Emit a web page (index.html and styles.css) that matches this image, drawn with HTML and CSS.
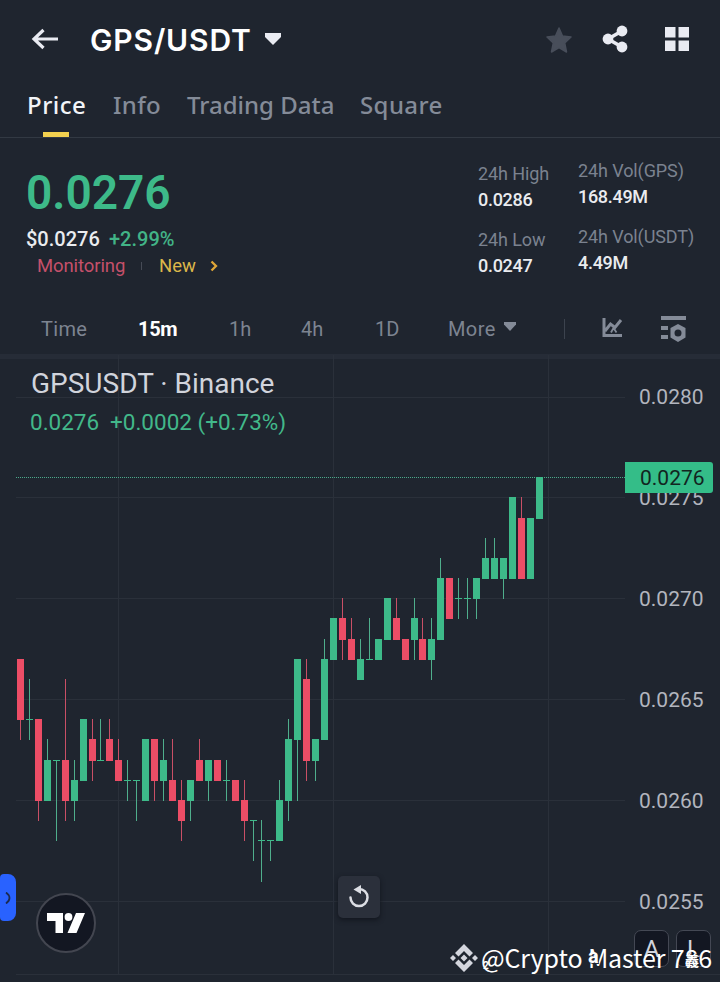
FILE: index.html
```html
<!DOCTYPE html>
<html lang="en">
<head>
<meta charset="utf-8">
<title>GPS/USDT</title>
<link rel="stylesheet" href="styles.css">
</head>
<body>
<div class="app">
  <header class="topbar">
    <svg class="back" width="28" height="22" viewBox="0 0 28 22"><path d="M27 11H3M12.500 2L3 11l9.500 9" fill="none" stroke="#e9ebf2" stroke-width="3.200"/></svg>
    <h1 class="title">GPS/USDT</h1>
    <svg class="caret" width="18" height="14" viewBox="0 0 18 14"><path d="M1 1h16v4L9 13 1 5z" fill="#e9ebf2"/></svg>
    <svg class="star" width="28" height="28" viewBox="0 0 28 28"><path d="M14 2l3.500 8 8.500 1-6.300 6 1.800 9L14 21.700 6.500 26l1.800-9L2 11l8.500-1z" fill="#484e5a" stroke="#484e5a" stroke-width="1.500" stroke-linejoin="round"/></svg>
    <svg class="share" width="26" height="28" viewBox="0 0 26 28"><path d="M20 6L6 14l14 8" fill="none" stroke="#e9ebf2" stroke-width="3.600"/><circle cx="20" cy="6" r="5.400" fill="#e9ebf2"/><circle cx="6" cy="14" r="5.400" fill="#e9ebf2"/><circle cx="20" cy="22" r="5.400" fill="#e9ebf2"/></svg>
    <svg class="tiles" width="24" height="24" viewBox="0 0 24 24"><path d="M0 0h10.500v10.500H0zM13.500 0H24v10.500H13.500zM0 13.500h10.500V24H0zM13.500 13.500H24V24H13.500z" fill="#e9ebf2"/></svg>
  </header>
  <nav class="tabs">
    <span class="tab tab-price active">Price</span>
    <span class="tab tab-info">Info</span>
    <span class="tab tab-data">Trading Data</span>
    <span class="tab tab-square">Square</span>
  </nav>
  <section class="summary">
    <div class="quote">
      <div class="last">0.0276</div>
      <div class="fiat"><span class="usd">$0.0276</span><span class="pct">+2.99%</span></div>
      <div class="tags"><span class="monitoring">Monitoring</span><i class="tick"></i><span class="new">New</span>
        <svg width="8" height="12" viewBox="0 0 8 12"><path d="M1.500 1.500L6 6l-4.500 4.500" fill="none" stroke="#dfa638" stroke-width="2.300"/></svg></div>
    </div>
    <dl class="stats range">
      <dt>24h High</dt><dd>0.0286</dd>
      <dt>24h Low</dt><dd>0.0247</dd>
    </dl>
    <dl class="stats volume">
      <dt>24h Vol(GPS)</dt><dd>168.49M</dd>
      <dt>24h Vol(USDT)</dt><dd>4.49M</dd>
    </dl>
  </section>
  <div class="toolbar">
    <span class="iv iv-time">Time</span>
    <span class="iv iv-15 on">15m</span>
    <span class="iv iv-1h">1h</span>
    <span class="iv iv-4h">4h</span>
    <span class="iv iv-1d">1D</span>
    <span class="iv iv-more">More</span>
    <svg class="drop" width="12" height="9" viewBox="0 0 12 9"><path d="M0 0h12v2.500L6 9 0 2.500z" fill="#848b98"/></svg>
    <i class="split"></i>
    <svg class="linechart" width="21" height="20" viewBox="0 0 21 20"><path d="M2 0v17.500h18M3 13l5.500-7 4.500 3.500L19 2" fill="none" stroke="#848b98" stroke-width="3"/><path d="M9 14.500l2.500-4.500 3 4.500" fill="none" stroke="#848b98" stroke-width="1.800"/></svg>
    <svg class="settings" width="25" height="26" viewBox="0 0 25 26"><path d="M0 0h25v4H0zM0 10h7v4H0zM0 19h7v4H0z" fill="#848b98"/><path fill-rule="evenodd" d="M17 8l7.500 4v9.500L17 26l-7.500-4.500V12zM17 13.500a3.500 3.500 0 100 7 3.500 3.500 0 000-7z" fill="#848b98"/></svg>
  </div>
  <main class="chart">
    <svg id="plot" class="plot" width="720" height="624" viewBox="0 355 720 624" shape-rendering="crispEdges"></svg>
    <div class="legend">
      <div class="symbol">GPSUSDT · Binance</div>
      <div class="change"><span class="c1">0.0276</span><span class="c2">+0.0002 (+0.73%)</span></div>
    </div>
    <div class="axis"><span>0.0280</span><span>0.0275</span><span>0.0270</span><span>0.0265</span><span>0.0260</span><span>0.0255</span></div>
    <div class="pricetag">0.0276</div>
    <div class="handle"><svg width="6" height="12" viewBox="0 0 6 12"><path d="M1 .5Q4.500 3 4.500 6T1 11.500" fill="none" stroke="#1b2a50" stroke-width="1.800"/></svg></div>
    <div class="tv"><svg width="38" height="20" viewBox="0 0 38 20"><path d="M0 0h16v20H8.500V8H0zM29 0h9l-8.500 20h-9z" fill="#fff"/><circle cx="21.500" cy="4" r="3.900" fill="#fff"/></svg></div>
    <div class="reset"><svg width="24" height="24" viewBox="0 0 24 24"><path d="M3.500 12.500a8.500 8.500 0 1 0 8.500-8.500" fill="none" stroke="#dcdee4" stroke-width="2.500" stroke-linecap="round"/><path d="M6.500 4.500L14 0v9z" fill="#dcdee4"/></svg></div>
    <div class="scale"><span>A</span><span>L</span></div>
  </main>
  <div class="watermark">
    <svg width="28" height="28" viewBox="0 0 28 28"><path d="M14 0l9 9-3.500 3.500L14 7l-5.500 5.500L5 9zM14 28l9-9-3.500-3.500L14 21l-5.500-5.500L5 19zM0 14l3-3 3 3-3 3zM22 14l3-3 3 3-3 3zM10.500 14l3.500-3.500 3.500 3.500-3.500 3.500z" fill="#d4d6de"/></svg>
    <span class="name">@Crypto Master 786</span>
    <span class="mark m1">2</span><span class="mark m2">a</span><span class="mark m3">義</span>
  </div>
</div>
<script src="chart.js"></script>
</body>
</html>
```
FILE: styles.css
```css
* { box-sizing: border-box; }
body { margin: 0; background: #1f252f; font-family: Roboto, "Noto Sans", sans-serif; color: #eaecef; }
svg { display: block; flex: none; }
.app { position: relative; width: 720px; height: 982px; overflow: hidden; display: flex; flex-direction: column; }
.app span, .app dt, .app dd, .title { white-space: nowrap; }

.topbar { height: 77px; display: flex; align-items: center; flex: none; padding-left: 31px; }
.title { margin: 3px 0 0 31px; width: 174px; font: 600 30px/40px Inter, sans-serif; letter-spacing: .85px; color: #fff; }
.star { margin: 2px 0 0 263px; }
.share { margin-left: 29px; }
.tiles { margin-left: 37px; }

.tabs { height: 61px; flex: none; display: flex; border-bottom: 1px solid #323943; padding: 1px 0 0 27px; font: 500 24px/54px "Noto Sans", sans-serif; color: #848b98; }
.tab { position: relative; }
.tab-price { width: 86px; letter-spacing: .5px; }
.tab-info { width: 74px; letter-spacing: .3px; }
.tab-data { width: 173px; }
.tab-square { letter-spacing: .4px; }
.tab.active { color: #f2f4f8; }
.tab.active::after { content: ""; position: absolute; left: 16px; top: 54px; width: 26px; height: 5px; background: #f3d14f; }

.summary { height: 164px; flex: none; display: flex; padding-left: 26px; }
.quote { width: 452px; }
.last { margin-top: 27px; height: 56px; width: 160px; font-weight: 600; font-size: 49px; line-height: 56px; color: #3dba89; transform: scaleX(.94); transform-origin: 0 0; }
.fiat { display: flex; height: 28px; margin-top: 4px; font-size: 20px; line-height: 28px; font-weight: 500; }
.usd { width: 83px; }
.pct { color: #42b487; font-weight: 500; }
.tags { display: flex; align-items: center; height: 26px; padding-left: 11px; font-size: 18.500px; }
.monitoring { width: 104px; color: #c5506a; letter-spacing: -.1px; }
.tick { width: 1px; height: 8px; background: #464b56; margin-right: 17px; }
.new { width: 51px; color: #dcb74a; }
.stats { margin: 0; font-size: 18px; line-height: 26px; }
.stats dt { color: #7b828f; height: 26px; letter-spacing: -.1px; }
.stats dd { margin: 0 0 14px; height: 26px; color: #eaecef; font-weight: 500; letter-spacing: -.3px; }
.range { width: 100px; padding-top: 23px; }
.volume { padding-top: 20px; }

.toolbar { height: 57px; flex: none; display: flex; align-items: center; padding: 1px 0 0 41px; border-bottom: 5px solid #262c37; font-size: 20px; color: #7d8491; }
.iv-time { width: 97px; letter-spacing: .3px; }
.iv-15 { width: 91px; color: #fff; font-weight: 700; letter-spacing: -.3px; }
.iv-1h { width: 72px; }
.iv-4h { width: 74px; }
.iv-1d { width: 73px; }
.iv-more { width: 56px; letter-spacing: .4px; }
.drop { margin-top: -4px; }
.split { width: 1px; height: 20px; margin: 0 37px 0 48px; background: #3c434e; }
.linechart { margin-top: -2px; }
.settings { margin-left: 38px; }

.chart { position: relative; flex: 1; }
.plot { position: absolute; left: 0; top: -4px; }
.legend { position: absolute; left: 31px; top: 8px; }
.symbol { font-size: 28px; line-height: 34px; color: #d1d4dc; height: 38px; }
.change { display: flex; font-size: 22.500px; line-height: 34px; color: #42b88a; }
.c1 { width: 80px; margin-left: -1px; }
.axis { position: absolute; left: 639px; top: 23px; display: flex; flex-direction: column; gap: 71px; font-size: 21px; line-height: 30px; color: #b2b5be; }
.pricetag { position: absolute; left: 625px; top: 103px; width: 88px; height: 31px; padding-left: 15px; border-radius: 0 3px 3px 0; background: #34bd88; color: #12251f; font-size: 21px; line-height: 32px; }
.handle { position: absolute; left: 0; top: 515px; width: 16px; height: 47px; border-radius: 4px 8px 8px 4px; background: #2962ff; display: flex; align-items: center; padding-left: 5px; }
.tv { position: absolute; left: 36px; top: 534px; width: 60px; height: 60px; border: 2px solid #434650; border-radius: 50%; background: #131722; display: flex; align-items: center; justify-content: center; }
.reset { position: absolute; left: 338px; top: 517px; width: 42px; height: 42px; border-radius: 5px; background: #2b303b; box-shadow: 0 2px 5px #12161e; display: flex; align-items: center; justify-content: center; }
.scale { position: absolute; left: 634px; top: 571px; display: flex; gap: 7px; }
.scale span { width: 35px; height: 37px; border: 1px solid #444854; border-radius: 7px; background: #131722; color: #d1d4dc; text-align: center; font-size: 24px; line-height: 36px; }

.watermark { position: absolute; left: 450px; top: 944px; height: 28px; display: flex; align-items: center; color: #fff; }
.name { margin: -3px 0 0 3px; font: 400 25px/28px "Noto Sans CJK SC", sans-serif; letter-spacing: -.12px; }
.mark { position: absolute; line-height: 16px; font-weight: 700; }
.m1 { left: 33px; top: 17px; font-size: 10px; line-height: 10px; }
.m2 { left: 138px; top: 4px; font-size: 20px; text-shadow: 1px 1px #1f252f; }
.m3 { left: 235px; top: 8px; font: 700 14px/16px "Noto Sans CJK SC", sans-serif; text-shadow: 1px 0 #1f252f; }
```
FILE: chart.js
```js
// [open-close top, bottom, high, low, rising] in units of 0.0001
const candles = [
  [267,264,267,263,0],[264,264,266,263,1],[264,260,264,259,0],[262,260,263,260,1],[262,262,262,258,1],
  [262,260,266,259,0],[261,260,262,259,1],[264,261,264,261,1],[263,262,264,261,0],[262,262,264,262,1],
  [263,262,264,262,0],[262,261,263,261,0],[261,261,262,260,1],[261,261,261,259,1],[263,260,263,260,1],
  [263,261,263,260,0],[262,261,263,260,1],[261,260,263,260,0],[260,259,261,258,0],[261,260,261,259,1],
  [262,261,263,261,0],[262,261,262,260,1],[262,261,262,261,0],[261,261,262,260,1],[261,260,261,260,0],
  [260,259,261,258,0],[259,259,259,257,1],[258,258,259,256,1],[258,258,258,257,1],[260,258,261,258,1],
  [263,260,264,259,1],[267,263,267,260,1],[266,262,267,261,0],[263,262,263,261,1],[267,263,268,263,1],
  [269,267,269,267,1],[269,268,270,267,0],[268,267,269,267,0],[267,266,268,266,1],[267,267,269,267,1],
  [268,267,268,267,1],[270,268,270,268,1],[269,268,270,268,0],[268,267,268,267,0],[269,268,270,267,1],
  [268,267,269,267,0],[268,267,269,266,1],[271,268,272,268,1],[271,269,271,269,0],[270,270,271,269,1],
  [270,270,271,269,1],[271,270,271,269,1],[272,271,273,271,1],[272,271,273,271,1],[272,271,272,270,1],
  [275,271,275,271,1],[274,271,275,271,0],[274,271,274,271,1],[276,274,276,274,1]
];
const y = p => Math.floor(397 + (280 - p) * 20.17);
const rect = (x, top, w, h, fill) => `<rect x="${x}" y="${top}" width="${w}" height="${h}" fill="${fill}"/>`;
let out = '';
for (const p of [280, 275, 270, 265, 260, 255]) out += rect(16, y(p), 609, 1, '#2a303a');
out += rect(16, 974, 704, 1, '#2a303a');
for (const x of [118, 333, 548]) out += rect(x, 355, 1, 620, '#2a303a');
out += '<path d="M16 477.500H625" stroke="#4ba98a" stroke-dasharray="1 1"/>';
candles.forEach(([top, bottom, high, low, up], i) => {
  const x = 17 + 9 * i - Math.floor((i + 9) / 18);
  out += rect(x + 3, y(high), 1, y(low) - y(high) + 1, up ? '#4fae8c' : '#c94f66');
  out += rect(x, y(top), 7, y(bottom) - y(top) + 1, up ? '#3dba89' : '#ec4d66');
});
document.getElementById('plot').innerHTML = out;
```
